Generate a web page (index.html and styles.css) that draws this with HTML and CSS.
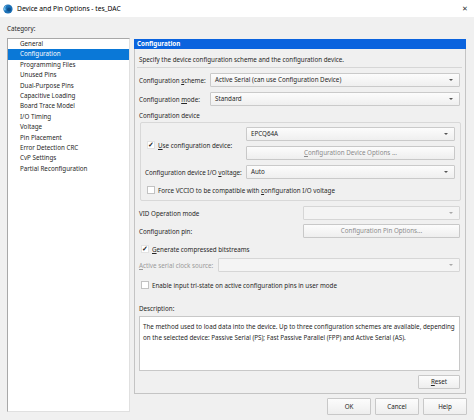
FILE: index.html
```html
<!DOCTYPE html>
<html>
<head>
<meta charset="utf-8">
<link rel="stylesheet" href="styles.css">
</head>
<body>
<div class="window">
  <div class="titlebar">
    <svg class="appicon" width="10" height="10" viewBox="0 0 10 10">
      <circle cx="5" cy="5" r="4.6" fill="#1b6fb5"/>
      <path d="M1.2 6.5 A4.2 4.2 0 0 1 5.5 0.9 A3.4 3.4 0 0 0 3 6.2 Z" fill="#6cc0ee"/>
      <circle cx="6" cy="5.6" r="2" fill="#0d4f8c"/>
    </svg>
    <span class="title">Device and Pin Options - tes_DAC</span>
    <span class="close">✕</span>
  </div>
  <div class="dialog">
    <div class="leftcol">
      <div class="cat-label">Category:</div>
      <ul class="catlist">
        <li>General</li>
        <li class="sel">Configuration</li>
        <li>Programming Files</li>
        <li>Unused Pins</li>
        <li>Dual-Purpose Pins</li>
        <li>Capacitive Loading</li>
        <li>Board Trace Model</li>
        <li>I/O Timing</li>
        <li>Voltage</li>
        <li>Pin Placement</li>
        <li>Error Detection CRC</li>
        <li>CvP Settings</li>
        <li>Partial Reconfiguration</li>
      </ul>
    </div>
    <div class="rightcol">
      <div class="panel">
        <div class="panel-head">Configuration</div>
        <div class="panel-body">
          <div class="intro">Specify the device configuration scheme and the configuration device.</div>
          <div class="row r-scheme">
            <span class="lbl">Configuration <u>s</u>cheme:</span>
            <div class="combo">Active Serial (can use Configuration Device)</div>
          </div>
          <div class="row r-mode">
            <span class="lbl">Configuration <u>m</u>ode:</span>
            <div class="combo">Standard</div>
          </div>
          <div class="sect-label">Configuration device</div>
          <div class="group">
            <div class="g-use">
              <span class="chk on">✓</span><span><u>U</u>se configuration device:</span>
            </div>
            <div class="combo g-dev">EPCQ64A</div>
            <div class="btn disabled g-opts"><u>C</u>onfiguration Device Options ...</div>
            <span class="lbl g-vlbl">Configuration device I/O <u>v</u>oltage:</span>
            <div class="combo g-volt">Auto</div>
            <div class="g-force">
              <span class="chk"></span><span>Force VCCIO to be compatible with <u>c</u>onfiguration I/O voltage</span>
            </div>
          </div>
          <div class="row r-vid">
            <span class="lbl">VID Operation mode</span>
            <div class="combo disabled"></div>
          </div>
          <div class="row r-pin">
            <span class="lbl">Configuration pin:</span>
            <div class="btn disabled">Configuration Pin Options...</div>
          </div>
          <div class="checkrow r-gen">
            <span class="chk on">✓</span><span><u>G</u>enerate compressed bitstreams</span>
          </div>
          <div class="row r-clk">
            <span class="lbl grey"><u>A</u>ctive serial clock source:</span>
            <div class="combo disabled"></div>
          </div>
          <div class="checkrow r-tri">
            <span class="chk"></span><span>Enable input tri-state on active configuration pins in user mode</span>
          </div>
          <div class="sect-label desc-label">Description:</div>
          <div class="descbox">The method used to load data into the device. Up to three configuration schemes are available, depending on the selected device: Passive Serial (PS); Fast Passive Parallel (FPP) and Active Serial (AS).</div>
          <div class="reset-row"><div class="btn reset"><u>R</u>eset</div></div>
        </div>
      </div>
      <div class="footer">
        <div class="btn fbtn">OK</div>
        <div class="btn fbtn">Cancel</div>
        <div class="btn fbtn">Help</div>
      </div>
    </div>
  </div>
</div>
</body>
</html>
```
FILE: styles.css
```css
* { box-sizing: border-box; }
html, body { margin: 0; padding: 0; }
body {
  font-family: "Noto Sans", "Open Sans", sans-serif;
  font-size: 6.25px;
  color: #262626;
  background: #f0f0f0;
}
u { text-decoration: underline; text-underline-offset: 1px; text-decoration-thickness: 0.5px; }
.window { width: 474px; height: 420px; background: #f0f0f0; overflow: hidden; }
.titlebar {
  height: 17px; background: #fff; display: flex; align-items: center;
  padding-left: 3px; color: #000; font-size: 6.7px;
}
.appicon { flex: none; margin-right: 4px; }
.title { flex: 1; }
.close { width: 16px; text-align: center; font-size: 7px; color: #333; margin-right: 1px; }

.dialog { display: flex; padding-left: 7px; }
.leftcol { width: 123px; padding-top: 4px; }
.cat-label { height: 17px; line-height: 16px; }
.catlist {
  list-style: none; margin: 0; padding: 0;
  height: 374px; background: #fff;
  border: 1px solid #a8a8a8; border-right-color: #e0e0e0; border-bottom-color: #e0e0e0;
}
.catlist li { height: 10.4px; line-height: 10.4px; padding-left: 12px; white-space: nowrap; }
.catlist li.sel { background: #0a78d7; color: #fff; }

.rightcol { width: 333px; margin-left: 4px; padding-top: 22px; }
.panel {
  width: 332px; height: 355px;
  border: 1px solid #c4c4c4; border-top: none;
  display: flex; flex-direction: column;
}
.panel-head {
  height: 10px; line-height: 10px; background: #0a63de; color: #fff;
  font-weight: bold; padding-left: 3px; margin: 0 -1px;
}
.panel-body { padding: 0 5px 0 4px; flex: 1; display: flex; flex-direction: column; }
.intro {
  height: 19px; padding-top: 4px; line-height: 14px;
  border-bottom: 1px solid #d6d6d6; margin: 0 -2px; padding-left: 2px;
}
.row { display: flex; align-items: center; height: 14px; }
.row .lbl { flex: none; }
.r-scheme { margin-top: 5px; }
.r-scheme .lbl, .r-mode .lbl { width: 71px; }
.r-mode { margin-top: 5px; }
.combo {
  position: relative; flex: 1; height: 14px; line-height: 12px;
  border: 1px solid #cacaca; border-radius: 1px;
  background: linear-gradient(#fcfcfc, #efefef);
  padding-left: 4px; white-space: nowrap; overflow: hidden;
}
.combo::after {
  content: ""; position: absolute; right: 6px; top: 5px;
  border-left: 2px solid transparent; border-right: 2px solid transparent;
  border-top: 2px solid #555;
}
.combo.disabled { background: #f4f4f4; border-color: #d6d6d6; }
.combo.disabled::after { border-top-color: #a8a8a8; }
.btn {
  height: 14px; line-height: 12px; text-align: center;
  border: 1px solid #c8c8c8; border-radius: 1px;
  background: linear-gradient(#fcfcfc, #eeeeee);
  white-space: nowrap;
}
.btn.disabled { color: #8a8a8a; }
.sect-label { margin-top: 4px; height: 12px; line-height: 12px; }

.group {
  height: 79px; margin: 0 -1px 0 1px;
  border: 1px solid #d8d8d8; border-radius: 2px;
  padding: 4px 5px 0 4px;
  display: grid;
  grid-template-columns: 101px 1fr;
  grid-template-rows: 14px 14px 14px 14px;
  row-gap: 5px;
}
.g-use { grid-column: 1; grid-row: 1 / span 2; display: flex; align-items: center; padding-left: 2px; padding-top: 3px; }
.g-dev { grid-column: 2; grid-row: 1; }
.g-opts { grid-column: 2; grid-row: 2; }
.g-vlbl { grid-column: 1; grid-row: 3; align-self: center; }
.g-volt { grid-column: 2; grid-row: 3; }
.g-force { grid-column: 1 / span 2; grid-row: 4; display: flex; align-items: center; padding-left: 2px; margin-top: -2px; }

.chk {
  width: 8px; height: 8px; flex: none; margin-right: 3px;
  border: 1px solid #c2c2c2; background: #fff;
  font-size: 7px; line-height: 6px; text-align: center; color: #222;
}
.chk.on { border-color: #e2e2e2; font-weight: bold; }

.r-vid { margin-top: 5px; }
.r-vid .lbl, .r-pin .lbl { width: 164px; }
.r-pin { margin-top: 4px; }
.r-pin .btn { flex: 1; }
.checkrow { display: flex; align-items: center; height: 12px; padding-left: 2px; }
.r-gen { margin-top: 5px; }
.r-clk { margin-top: 3px; }
.r-clk .lbl { width: 79px; }
.grey { color: #9a9a9a; }
.r-tri { margin-top: 7px; }
.desc-label { margin-top: 12px; }
.descbox {
  height: 55px; margin-top: 1px; background: #fff;
  border: 1px solid #c8c8c8; padding: 4px 3px; line-height: 11px;
}
.reset-row { display: flex; justify-content: flex-end; margin-top: 4px; }
.reset { width: 42px; }

.footer { display: flex; gap: 4px; justify-content: flex-end; margin-top: 4px; margin-right: 0; }
.fbtn { width: 44px; height: 17px; line-height: 15px; color: #222; }
```
